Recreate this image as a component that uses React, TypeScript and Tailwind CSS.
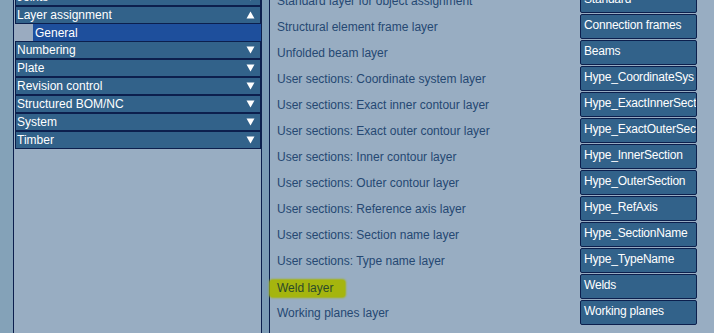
import React from "react";

const leftRows = [
  { t: "Joints", up: false },
  { t: "Layer assignment", up: true },
  { t: "__general__", up: false },
  { t: "Numbering", up: false },
  { t: "Plate", up: false },
  { t: "Revision control", up: false },
  { t: "Structured BOM/NC", up: false },
  { t: "System", up: false },
  { t: "Timber", up: false },
];

const rightRows: [string, string][] = [
  ["Standard layer for object assignment", "Standard"],
  ["Structural element frame layer", "Connection frames"],
  ["Unfolded beam layer", "Beams"],
  ["User sections: Coordinate system layer", "Hype_CoordinateSys"],
  ["User sections: Exact inner contour layer", "Hype_ExactInnerSect"],
  ["User sections: Exact outer contour layer", "Hype_ExactOuterSect"],
  ["User sections: Inner contour layer", "Hype_InnerSection"],
  ["User sections: Outer contour layer", "Hype_OuterSection"],
  ["User sections: Reference axis layer", "Hype_RefAxis"],
  ["User sections: Section name layer", "Hype_SectionName"],
  ["User sections: Type name layer", "Hype_TypeName"],
  ["Weld layer", "Welds"],
  ["Working planes layer", "Working planes"],
];

function Tri({ up }: { up: boolean }) {
  return (
    <svg width="9" height="8" viewBox="0 0 9 8" className="block">
      {up ? <polygon points="4.5,0.5 8.5,7.5 0.5,7.5" fill="#ffffff" /> : <polygon points="0.5,0.5 8.5,0.5 4.5,7.5" fill="#ffffff" />}
    </svg>
  );
}

export default function App() {
  return (
    <div
      className="w-[714px] h-[333px] overflow-hidden flex bg-[#98adc2] text-[12px]"
      style={{ fontFamily: '"Liberation Sans", Arial, sans-serif' }}
    >
      <div className="w-[13px] h-full bg-[#84a2b8] shrink-0" />
      <div className="w-[1px] h-full bg-[#0c1f4d] shrink-0" />
      {/* left panel */}
      <div className="w-[247px] h-full bg-[#98adc2] shrink-0 pl-[1px]">
        <div className="flex flex-col mt-[-12px]">
          {leftRows.map((r, i) =>
            r.t === "__general__" ? (
              <div key={i} className="h-[17px] flex">
                <div className="w-[18px] h-full bg-[#9aabc0]" />
                <div className="flex-1 h-full bg-[#1e4f9c] text-white pl-[2px] flex items-center leading-none">
                  General
                </div>
              </div>
            ) : (
              <div
                key={i}
                className="h-[18px] border border-[#0c1f4d] bg-[#32628a] text-white flex items-center justify-between pl-[1px] pr-[5px] leading-none"
              >
                <span>{r.t}</span>
                <Tri up={r.up} />
              </div>
            )
          )}
        </div>
      </div>
      <div className="w-[1px] h-full bg-[#0c1f4d] shrink-0" />
      <div className="w-[7px] h-full bg-[#7b9bb5] shrink-0" />
      <div className="w-[1px] h-full bg-[#0c1f4d] shrink-0" />
      {/* right panel */}
      <div className="flex-1 h-full pl-[7px] pr-[17px]">
        <div className="flex flex-col gap-[1px] mt-[-12px]">
          {rightRows.map(([label, val], i) => (
            <div key={i} className="h-[25px] flex items-center justify-between">
              {label === "Weld layer" ? (
                <span className="inline-block -ml-[7px] pl-[7px] pr-[12px] h-[17px] leading-[17px] mt-[3px] bg-[#a5b50e] shadow-[0_0_2px_1px_#a5b50e] rounded-[3px] text-[#2c4a2a]">
                  {label}
                </span>
              ) : (
                <span className="text-[#254872] leading-none">{label}</span>
              )}
              <div className="w-[117px] h-[25px] border border-[#0c1f4d] rounded-[2px] bg-[#32628a] text-white pl-[3px] pb-[3px] flex items-center overflow-hidden whitespace-nowrap leading-none tracking-[-0.2px]">
                {val}
              </div>
            </div>
          ))}
        </div>
      </div>
    </div>
  );
}
